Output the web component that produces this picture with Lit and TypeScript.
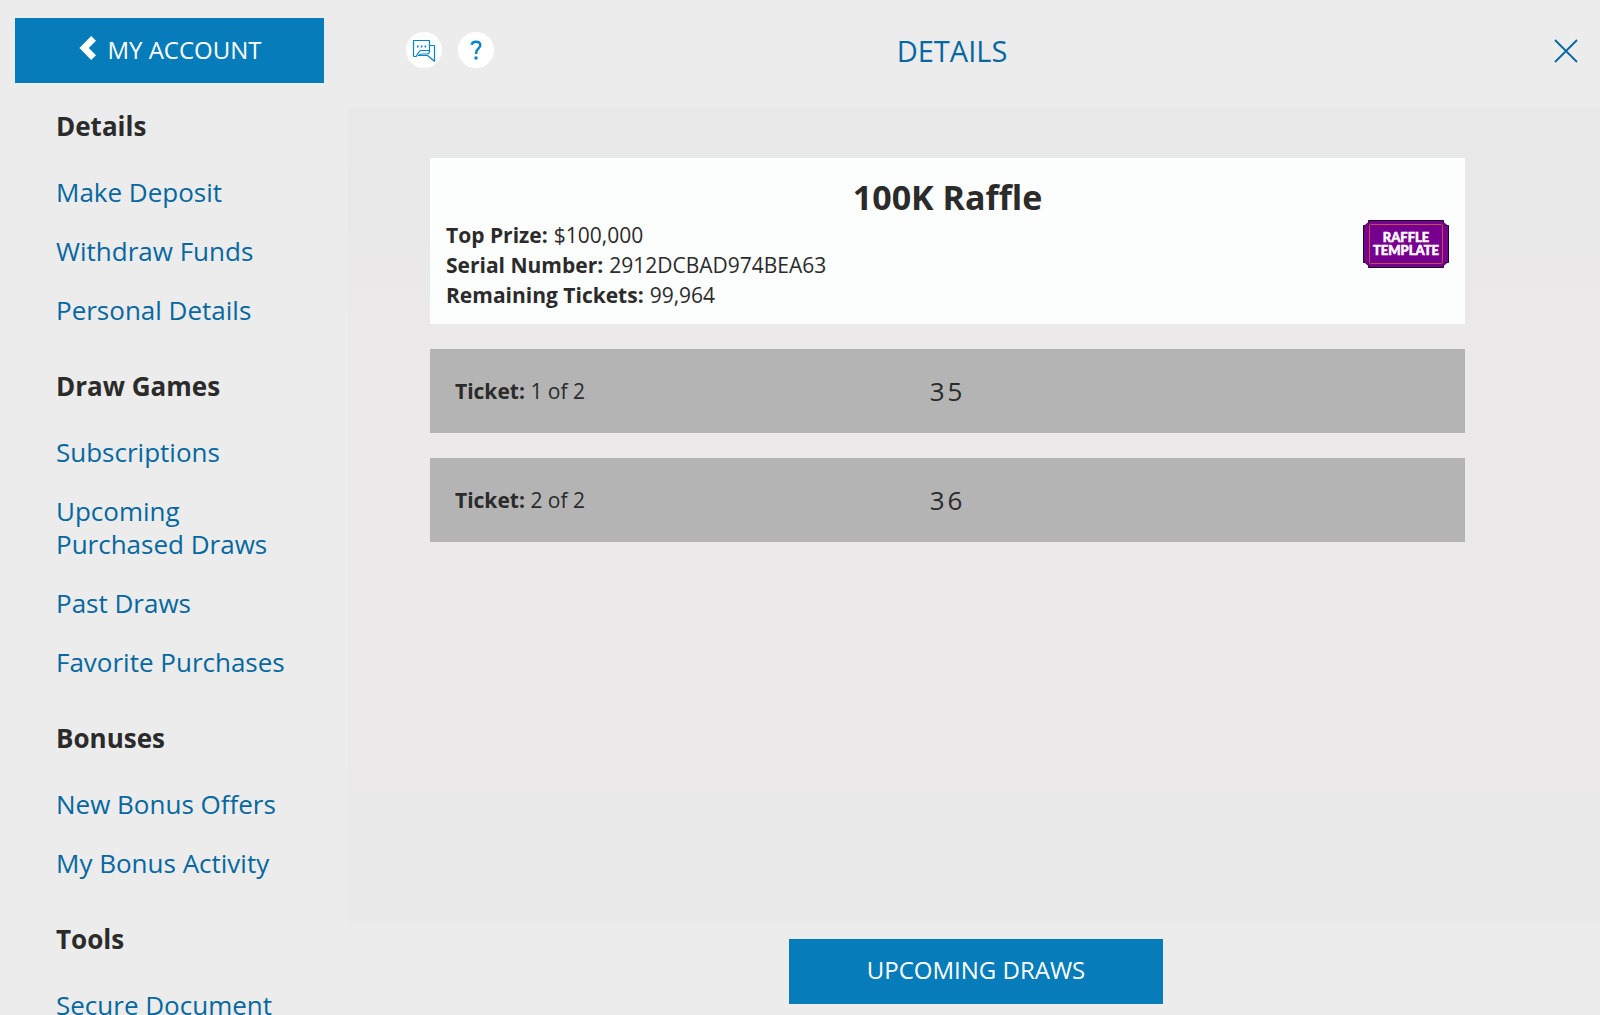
import { LitElement, html, css, svg } from "lit";
import { customElement, state } from "lit/decorators.js";

interface MenuGroup {
  title: string;
  links: string[];
}

const MENU: MenuGroup[] = [
  { title: "Details", links: ["Make Deposit", "Withdraw Funds", "Personal Details"] },
  {
    title: "Draw Games",
    links: ["Subscriptions", "Upcoming Purchased Draws", "Past Draws", "Favorite Purchases"],
  },
  { title: "Bonuses", links: ["New Bonus Offers", "My Bonus Activity"] },
  { title: "Tools", links: ["Secure Document"] },
];

const slug = (text: string) => "#" + text.toLowerCase().replace(/\s+/g, "-");

@customElement("account-menu")
export class AccountMenu extends LitElement {
  static styles = css`
    :host {
      display: flex;
      flex-direction: column;
      min-height: 0;
      padding: 18px 24px 0 15px;
    }
    .back {
      flex: none;
      display: flex;
      align-items: center;
      justify-content: center;
      gap: 10px;
      height: 65px;
      border: 0;
      padding: 0 0 3px 2px;
      background: #067cba;
      color: #fff;
      font: inherit;
      font-size: 24px;
      cursor: pointer;
    }
    .chevron {
      width: 18px;
      height: 24px;
      margin-bottom: 3px;
    }
    .menu {
      flex: 1;
      min-height: 0;
      overflow-y: auto;
      scrollbar-width: none;
      padding: 27px 32px 0 41px;
      font-size: 26px;
      line-height: 33px;
    }
    .group {
      margin-bottom: 43px;
    }
    .title {
      margin: 0 0 33px;
      font-size: 26px;
      font-weight: 700;
      color: #2b2b2b;
    }
    .links {
      display: flex;
      flex-direction: column;
      gap: 26px;
      margin: 0;
      padding: 0;
      list-style: none;
    }
    .link {
      color: #0568a0;
      text-decoration: none;
    }
    .link:hover {
      text-decoration: underline;
    }
  `;

  render() {
    return html`
      <button class="back" type="button">
        <svg class="chevron" viewBox="0 0 18 24" aria-hidden="true">
          <path d="M12.2 0 17 4.8 9.8 12 17 19.2 12.2 24 0.4 12Z" fill="#fff" />
        </svg>
        <span>MY ACCOUNT</span>
      </button>
      <nav class="menu">
        ${MENU.map(
          (group) => html`
            <section class="group">
              <h2 class="title">${group.title}</h2>
              <ul class="links">
                ${group.links.map(
                  (label) => html`<li><a class="link" href=${slug(label)}>${label}</a></li>`
                )}
              </ul>
            </section>
          `
        )}
      </nav>
    `;
  }
}

const raffleBadge = svg`
  <path d="M5.500 .5H80.500V2.500L84 5.500H85.500V42.500H84L80.500 45.500V47.500H5.500V45.500L2 42.500H.5V5.500H2L5.500 2.500Z"
    fill="#77008f" stroke="#1c0524" stroke-width="1" />
  <rect x="6.500" y="4.500" width="73" height="39" rx="1" fill="none" stroke="#c0504f" stroke-width="1" />
  <text x="43" y="22" text-anchor="middle">RAFFLE</text>
  <text x="43" y="35" text-anchor="middle">TEMPLATE</text>
`;

@customElement("raffle-card")
export class RaffleCard extends LitElement {
  static styles = css`
    :host {
      display: block;
      padding: 19px 16px 14px;
      background: #fcfdfd;
      color: #2b2b2b;
    }
    .name {
      margin: 0;
      text-align: center;
      font-size: 34px;
      line-height: 40px;
      font-weight: 700;
    }
    .body {
      display: flex;
      align-items: flex-start;
      justify-content: space-between;
      padding-top: 3px;
    }
    .facts {
      margin: 0;
      font-size: 21px;
      line-height: 30px;
    }
    .fact {
      display: flex;
      gap: 6px;
    }
    dt {
      font-weight: 700;
    }
    dd {
      margin: 0;
    }
    .badge {
      width: 86px;
      height: 48px;
    }
    .badge text {
      fill: #fff;
      stroke: #fff;
      stroke-width: 0.5;
      font-family: Lato, "Open Sans", sans-serif;
      font-weight: 900;
      font-size: 13px;
    }
  `;

  render() {
    const facts = [
      ["Top Prize:", "$100,000"],
      ["Serial Number:", "2912DCBAD974BEA63"],
      ["Remaining Tickets:", "99,964"],
    ];
    return html`
      <h2 class="name">100K Raffle</h2>
      <div class="body">
        <dl class="facts">
          ${facts.map(([k, v]) => html`<div class="fact"><dt>${k}</dt><dd>${v}</dd></div>`)}
        </dl>
        <svg class="badge" viewBox="0 0 86 48" role="img">${raffleBadge}</svg>
      </div>
    `;
  }
}

@customElement("app-root")
export class AppRoot extends LitElement {
  @state() private tickets = [35, 36];

  static styles = css`
    :host {
      display: grid;
      grid-template-columns: 348px minmax(0, 1fr);
      height: 100vh;
      overflow: hidden;
      background: #ececec;
      color: #2b2b2b;
      font-family: "Open Sans", "Noto Sans", sans-serif;
    }
    .page {
      display: grid;
      grid-template-rows: 108px minmax(0, 1fr) 93px;
      min-width: 0;
      min-height: 0;
    }
    .header {
      display: grid;
      grid-template-columns: 1fr auto 1fr;
      align-items: center;
      padding: 0 20px 6px 58px;
    }
    .tools {
      display: flex;
      gap: 16px;
      padding-bottom: 2px;
    }
    .round,
    .close {
      display: flex;
      align-items: center;
      justify-content: center;
      border: 0;
      padding: 0;
      cursor: pointer;
    }
    .round {
      width: 36px;
      height: 36px;
      border-radius: 50%;
      background: #fff;
    }
    .round svg {
      width: 24px;
      height: 24px;
    }
    .heading {
      margin: 0 82px 0 0;
      font-size: 29px;
      line-height: 40px;
      font-weight: 400;
      color: #0568a0;
    }
    .close {
      justify-self: end;
      width: 28px;
      height: 28px;
      background: none;
    }
    .content {
      display: flex;
      flex-direction: column;
      gap: 25px;
      overflow-y: auto;
      padding: 50px 135px 25px 82px;
      background: linear-gradient(#e8e8e8, #ebe9ea 30%, #ebe9ea 75%, #e9e9e9);
    }
    .tickets {
      display: flex;
      flex-direction: column;
      gap: 25px;
      margin: 0;
      padding: 0;
      list-style: none;
    }
    .ticket {
      display: grid;
      grid-template-columns: 1fr auto 1fr;
      align-items: center;
      height: 84px;
      padding: 0 25px;
      background: #b4b4b4;
      font-size: 21px;
      line-height: 30px;
    }
    .number {
      font-size: 26px;
      letter-spacing: 3px;
    }
    .footer {
      display: flex;
      align-items: center;
      justify-content: center;
      padding: 5px 0 0 4px;
    }
    .primary {
      width: 374px;
      height: 65px;
      border: 0;
      padding: 0 0 3px;
      background: #067cba;
      color: #fff;
      font: inherit;
      font-size: 24px;
      cursor: pointer;
    }
  `;

  render() {
    const total = this.tickets.length;
    return html`
      <account-menu></account-menu>
      <main class="page">
        <header class="header">
          <div class="tools">
            <button class="round" type="button" aria-label="Chat">
              <svg viewBox="0 0 24 24" fill="none" stroke="#0583c6" stroke-width="1.2" stroke-linejoin="round">
                <path d="M1.500 2.500H17.500V12.500H9.500C7 12.500 6 15 4.200 18.500H2.200L1.500 18V2.500Z" />
                <path d="M17.500 7.500H22.500V23.300L15.500 17.500H6.500C7.500 16.500 8.500 16 10 16H15.500C17 16 17.500 15 17.500 12.500" />
                <path d="M5 8.500h1.600M8.800 8.500h1.600M12.600 8.500h1.600" stroke-width="1.8" />
              </svg>
            </button>
            <button class="round" type="button" aria-label="Help">
              <svg viewBox="0 0 24 24" fill="none" stroke="#0583c6" stroke-width="2.400">
                <path d="M7.600 6.800C8 4.600 9.600 3.700 12 3.700C14.700 3.700 16.300 5 16.300 7.300C16.300 10.500 12.200 10.800 12.200 14.500V16" />
                <circle cx="12" cy="20" r="1.700" fill="#0583c6" stroke="none" />
              </svg>
            </button>
          </div>
          <h1 class="heading">DETAILS</h1>
          <button class="close" type="button" aria-label="Close">
            <svg width="28" height="28" viewBox="0 0 28 28" stroke="#0568a0" stroke-width="1.800">
              <path d="M3 3 25 25M25 3 3 25" />
            </svg>
          </button>
        </header>
        <section class="content">
          <raffle-card></raffle-card>
          <ul class="tickets">
            ${this.tickets.map(
              (n, i) => html`
                <li class="ticket">
                  <span><b>Ticket:</b> ${i + 1} of ${total}</span>
                  <span class="number">${n}</span>
                </li>
              `
            )}
          </ul>
        </section>
        <footer class="footer">
          <button class="primary" type="button">UPCOMING DRAWS</button>
        </footer>
      </main>
    `;
  }
}
